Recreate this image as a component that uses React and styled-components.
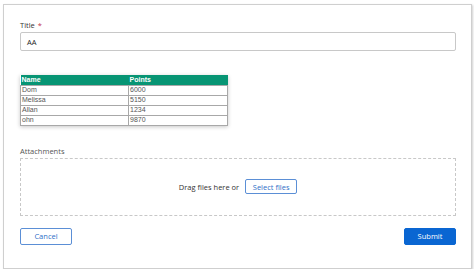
import React from "react";
import styled, { createGlobalStyle } from "styled-components";

const Global = createGlobalStyle`
  html, body { margin: 0; padding: 0; background: #fff; }
  body { font-family: "Open Sans", "Noto Sans", sans-serif; }
  * { box-sizing: border-box; }
`;

const Frame = styled.div`
  margin: 4px 2px 0 3px;
  width: 469px;
  height: 265px;
  border: 1px solid #cfcfcf;
  box-shadow: 1px 1px 2px rgba(0,0,0,0.18);
  padding: 15px 15px 0 16px;
  display: flex;
  flex-direction: column;
`;

const Label = styled.div`
  font-size: 7.5px;
  line-height: 11px;
  color: #333;
  height: 11px;
`;

const Req = styled.span`
  color: #c4314b;
  margin-left: 3px;
`;

const Input = styled.div`
  margin-top: 1px;
  height: 19px;
  border: 1px solid #c8c8c8;
  border-radius: 2px;
  display: flex;
  align-items: center;
  padding-left: 6px;
  font-size: 7.5px;
  color: #222;
`;

const TableWrap = styled.div`
  margin-top: 24px;
  width: 208px;
  box-shadow: 0 1px 4px rgba(0,0,0,0.22);
`;

const Table = styled.table`
  width: 100%;
  border-collapse: collapse;
  font-family: "Liberation Sans", Arial, sans-serif;
  font-size: 7px;
  table-layout: fixed;
`;

const Th = styled.th`
  background: #079574;
  color: #fff;
  font-weight: bold;
  text-align: left;
  height: 10px;
  padding: 0 1px;
  line-height: 9px;
  width: ${(p) => p.$w}px;
`;

const Td = styled.td`
  border: 1px solid #a8a8a8;
  color: #555;
  height: 10px;
  padding: 0 1px;
  line-height: 8px;
`;

const AttachLabel = styled(Label)`
  margin-top: 20px;
  color: #555;
`;

const Drop = styled.div`
  margin-top: 1px;
  height: 58px;
  border: 1px dashed #c8c8c8;
  display: flex;
  align-items: center;
  justify-content: center;
  gap: 6px;
  font-size: 7.5px;
  color: #333;
`;

const Button = styled.button`
  font-family: "Open Sans", "Noto Sans", sans-serif;
  font-size: 7.5px;
  height: ${(p) => p.$h || 17}px;
  width: ${(p) => p.$w}px;
  border-radius: 2px;
  border: 1px solid ${(p) => (p.$primary ? "#0a66d2" : "#5b8fd6")};
  background: ${(p) => (p.$primary ? "#0a66d2" : "#fff")};
  color: ${(p) => (p.$primary ? "#fff" : "#2f6fc8")};
  padding: 0;
  display: flex;
  align-items: center;
  justify-content: center;
`;

const Footer = styled.div`
  margin-top: 12px;
  display: flex;
  justify-content: space-between;
`;

const rows = [
  ["Dom", "6000"],
  ["Melissa", "5150"],
  ["Allan", "1234"],
  ["ohn", "9870"],
];

export default function App() {
  return (
    <>
      <Global />
      <Frame>
        <Label>
          Title<Req>*</Req>
        </Label>
        <Input>AA</Input>
        <TableWrap>
          <Table>
            <thead>
              <tr>
                <Th $w={108}>Name</Th>
                <Th>Points</Th>
              </tr>
            </thead>
            <tbody>
              {rows.map(([n, p]) => (
                <tr key={n}>
                  <Td>{n}</Td>
                  <Td>{p}</Td>
                </tr>
              ))}
            </tbody>
          </Table>
        </TableWrap>
        <AttachLabel>Attachments</AttachLabel>
        <Drop>
          <span>Drag files here or</span>
          <Button $w={52} $h={15}>Select files</Button>
        </Drop>
        <Footer>
          <Button $w={52}>Cancel</Button>
          <Button $w={52} $primary>Submit</Button>
        </Footer>
      </Frame>
    </>
  );
}
